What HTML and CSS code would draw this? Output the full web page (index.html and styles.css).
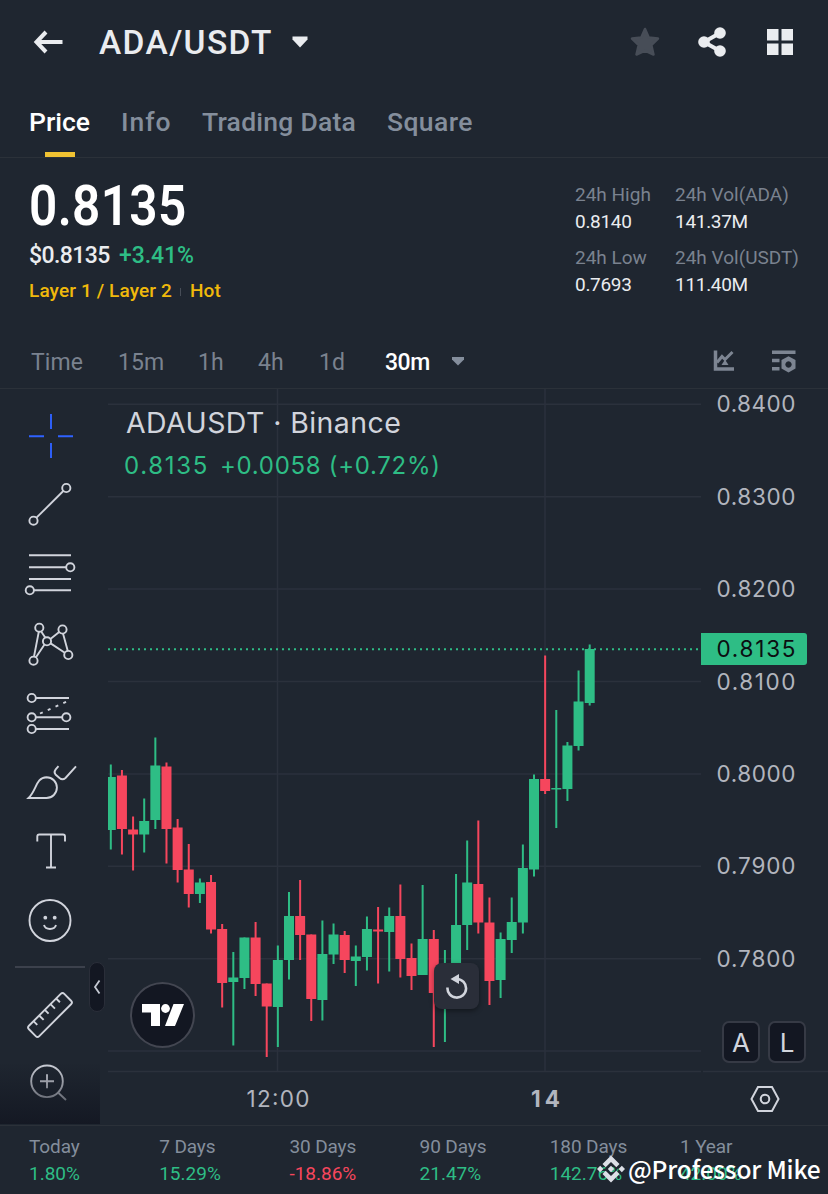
FILE: index.html
```
<!DOCTYPE html>
<html lang="en">
<head>
    <meta charset="UTF-8">
    <meta name="viewport" content="width=device-width, initial-scale=1.0">
    <title>ADA/USDT</title>
    <link rel="stylesheet" href="styles.css">
</head>
<body>

    <header class="top-bar">
        <svg class="back-icon" width="30" height="24" viewBox="0 0 30 24">
            <path d="M13 2 L3.500 12 L13 22 M3 12 H29.500" fill="none" stroke="#eaecef" stroke-width="4"/>
        </svg>
        <h1 class="pair">ADA/USDT</h1>
        <svg class="pair-arrow" width="16" height="12" viewBox="0 0 16 12">
            <path d="M0.5 0.5 H15.5 V3.5 L8 11.5 L0.5 3.5 Z" fill="#eaecef"/>
        </svg>
        <div class="top-actions">
            <svg width="30" height="30" viewBox="0 0 30 30">
                <path d="M15 2 L18.7 10.6 L28 11.5 L21.3 18 L23.5 27.5 L15 23.5 L6.500 27.500 L8.700 18 L2 11.500 L11.300 10.600 Z" fill="#474d57" stroke="#474d57" stroke-width="2.500" stroke-linejoin="round"/>
            </svg>
            <svg width="30" height="30" viewBox="0 0 30 30">
                <path d="M22 6 L6 15 L22 24" fill="none" stroke="#eaecef" stroke-width="4"/>
                <circle cx="22" cy="6" r="5.800" fill="#eaecef"/>
                <circle cx="6" cy="15" r="5.800" fill="#eaecef"/>
                <circle cx="22" cy="24" r="5.800" fill="#eaecef"/>
            </svg>
            <svg width="30" height="30" viewBox="0 0 30 30">
                <path d="M2 2 H13.500 V13.500 H2 Z M16.500 2 H28 V13.500 H16.500 Z M2 16.500 H13.500 V28 H2 Z M16.500 16.500 H28 V28 H16.500 Z" fill="#eaecef"/>
            </svg>
        </div>
    </header>

    <nav class="tabs">
        <a class="tab tab-active">Price</a>
        <a class="tab tab-info">Info</a>
        <a class="tab tab-data">Trading Data</a>
        <a class="tab tab-square">Square</a>
    </nav>

    <section class="summary">
        <div class="summary-left">
            <div class="last-price">0.8135</div>
            <div class="fiat"><span class="fiat-price">$0.8135</span><span class="fiat-change">+3.41%</span></div>
            <div class="tags"><span>Layer 1 / Layer 2</span><i class="tag-sep"></i><span>Hot</span></div>
        </div>
        <div class="stats">
            <div class="stat">
                <div class="stat-label">24h High</div>
                <div class="stat-value">0.8140</div>
            </div>
            <div class="stat">
                <div class="stat-label">24h Vol(ADA)</div>
                <div class="stat-value">141.37M</div>
            </div>
            <div class="stat">
                <div class="stat-label">24h Low</div>
                <div class="stat-value">0.7693</div>
            </div>
            <div class="stat">
                <div class="stat-label">24h Vol(USDT)</div>
                <div class="stat-value">111.40M</div>
            </div>
        </div>
    </section>

    <nav class="intervals">
        <span class="int-time">Time</span>
        <span class="int-15m">15m</span>
        <span class="int-1h">1h</span>
        <span class="int-4h">4h</span>
        <span class="int-1d">1d</span>
        <span class="int-active">30m</span>
        <svg class="int-arrow" width="12" height="10" viewBox="0 0 12 10">
            <path d="M0 0 H12 V2.500 L6 8.500 L0 2.500 Z" fill="#848e9c"/>
        </svg>
        <div class="int-actions">
            <svg width="24" height="24" viewBox="0 0 24 24">
                <path d="M3.500 0.500 V19 H22" fill="none" stroke="#7d8592" stroke-width="3.500"/>
                <path d="M5 12.500 L10 6.500 L13 9.500 L20.500 2" fill="none" stroke="#7d8592" stroke-width="3"/>
                <path d="M13 9.500 L16.500 15 H9.500 Z" fill="#7d8592"/>
            </svg>
            <svg width="26" height="24" viewBox="0 0 26 24">
                <path d="M1 2.300 H24.500 M1 10.500 H8.500 M1 18.800 H8.500" fill="none" stroke="#7d8592" stroke-width="3.400"/>
                <path d="M17.500 6.300 L24.500 10 V18.500 L17.500 22.500 L10.500 18.500 V10 Z M17.500 11.300 a3.200 3.200 0 1 0 0.010 0 Z" fill="#7d8592" fill-rule="evenodd"/>
            </svg>
        </div>
    </nav>

    <main class="chart-area">
        <aside class="tools">
            <div class="tool">
                <svg class="tool-on" viewBox="0 0 52 52"><path d="M5 26.300 H20 M34 26.300 H49 M27 4 V19 M27 33 V48"/></svg>
            </div>
            <div class="tool">
                <svg viewBox="0 0 52 52"><path d="M12.500 38.700 L39.300 12"/><circle cx="9.500" cy="41.700" r="4.100"/><circle cx="42.300" cy="9" r="4.100"/></svg>
            </div>
            <div class="tool">
                <svg viewBox="0 0 52 52"><path d="M5 7.300 H47 M5 19.300 H42 M5 31 H47 M10 42.300 H47"/><circle cx="46.300" cy="19.300" r="4.100"/><circle cx="5.800" cy="42.300" r="4.100"/></svg>
            </div>
            <div class="tool">
                <svg viewBox="0 0 52 52"><path d="M14.800 13.800 L10 38.600 M12 39.300 L20.500 26.500 M17.200 13.400 L21.200 19.600 M26.400 20.900 L35.200 14 M39 15.600 L43.800 32.900 M26.600 25.400 L40.800 34.800"/><circle cx="15.300" cy="9.700" r="4.100"/><circle cx="38.500" cy="11.500" r="4.100"/><circle cx="23" cy="23.300" r="4.100"/><circle cx="9.500" cy="42.700" r="4.100"/><circle cx="44.300" cy="37" r="4.100"/></svg>
            </div>
            <div class="tool">
                <svg viewBox="0 0 52 52"><path d="M12 11 H45 M12 30.300 H38 M12 42 H45"/><path d="M16 26.500 L43 14.500" stroke-dasharray="3 5.500"/><circle cx="7.700" cy="11" r="4.100"/><circle cx="7.700" cy="30.300" r="4.100"/><circle cx="42.300" cy="30.300" r="4.100"/><circle cx="7.700" cy="42" r="4.100"/></svg>
            </div>
            <div class="tool">
                <svg viewBox="0 0 52 52"><path d="M4.500 42 C13 34 11.500 21.500 22.500 21.200 A10.400 10.400 0 0 1 22.500 42 Z"/><path d="M34.500 10.200 L31.700 13.300 Q29.500 16 31.500 18.500 L35.500 22 Q38.500 24.500 41.500 22 L52 10.300"/></svg>
            </div>
            <div class="tool">
                <svg viewBox="0 0 52 52"><path d="M13.300 16.500 V11.500 Q13.300 9.500 15.300 9.500 H39 Q41 9.500 41 11.500 V16.500 M27 9.500 V42.500 M22 42.500 H32"/></svg>
            </div>
            <div class="tool">
                <svg viewBox="0 0 52 52"><circle cx="26" cy="26.500" r="20.500"/><circle class="eye" cx="21.300" cy="23.700" r="1.900"/><circle class="eye" cx="30.700" cy="23.700" r="1.900"/><path d="M20 31 C21.500 36.300 30.500 36.300 32 31"/></svg>
            </div>
            <div class="tool-sep"></div>
            <div class="tool">
                <svg viewBox="0 0 52 52"><g transform="translate(26 27) rotate(-45)"><rect x="-25" y="-7.300" width="50" height="14.600" rx="2.500"/><path d="M-16 -7 V-2 M-8 -7 V-1 M0 -7 V-2 M8 -7 V-1 M16 -7 V-2"/></g></svg>
            </div>
            <div class="tool">
                <svg viewBox="0 0 52 52"><circle cx="23" cy="24.300" r="15.800"/><path d="M16 24.300 H30 M23 17.300 V31.300 M34.500 36 L42 43"/></svg>
            </div>
            <div class="tools-fade"></div>
            <div class="tools-toggle">
                <svg width="8" height="16" viewBox="0 0 8 16"><path d="M6.500 1.500 L2 8 L6.500 14.500" fill="none" stroke="#c5c9d3" stroke-width="1.800"/></svg>
            </div>
        </aside>

        <div class="plot">
            <svg id="chart" width="728" height="736" viewBox="100 389 728 736"></svg>

            <div class="legend">
                <div class="legend-title">ADAUSDT · Binance</div>
                <div class="legend-values"><span class="legend-price">0.8135</span><span>+0.0058 (+0.72%)</span></div>
            </div>

            <div class="tv-logo">
                <svg width="42" height="22" viewBox="0 0 42 22">
                    <path d="M0 0 H18 V22 H9 V8.500 H0 Z M31.500 0 H42 L33 22 H23 Z" fill="#fff"/>
                    <circle cx="23.500" cy="4.500" r="4.400" fill="#fff"/>
                </svg>
            </div>

            <div class="reset-btn">
                <svg width="24" height="26" viewBox="0 0 24 26">
                    <path d="M2.500 14.500 A9.300 9.300 0 1 0 12 6" fill="none" stroke="#d1d4dc" stroke-width="2.600"/>
                    <path d="M5.500 6 L14 1 V11 Z" fill="#d1d4dc"/>
                </svg>
            </div>

            <div class="scale-btns">
                <span class="scale-btn">A</span>
                <span class="scale-btn">L</span>
            </div>

            <svg class="axis-gear" width="30" height="28" viewBox="0 0 30 28">
                <path d="M8 2 H22 L28.500 14 L22 26 H8 L1.500 14 Z" fill="none" stroke="#d1d4dc" stroke-width="2"/>
                <circle cx="15" cy="14" r="4.300" fill="none" stroke="#d1d4dc" stroke-width="2"/>
            </svg>
        </div>
    </main>

    <footer class="returns">
        <div class="return"><span class="return-label">Today</span><span class="up">1.80%</span></div>
        <div class="return"><span class="return-label">7 Days</span><span class="up">15.29%</span></div>
        <div class="return"><span class="return-label">30 Days</span><span class="down">-18.86%</span></div>
        <div class="return"><span class="return-label">90 Days</span><span class="up">21.47%</span></div>
        <div class="return"><span class="return-label">180 Days</span><span class="up">142.76%</span></div>
        <div class="return"><span class="return-label">1 Year</span><span class="up">42.00%</span></div>
    </footer>

    <div class="author">
        <svg width="28" height="28" viewBox="0 0 28 28">
            <path d="M14 0.500 L22.500 9 L19.300 12.200 L14 6.900 L8.700 12.200 L5.500 9 Z M14 27.500 L22.500 19 L19.300 15.800 L14 21.100 L8.700 15.800 L5.500 19 Z M14 10.800 L17.200 14 L14 17.200 L10.800 14 Z M3.200 10.800 L6.400 14 L3.200 17.200 L0 14 Z M24.800 10.800 L28 14 L24.800 17.200 L21.600 14 Z" fill="#dcdfe6"/>
        </svg>
        <span>@Professor Mike</span>
    </div>

    <script src="script.js"></script>
</body>
</html>
```
FILE: styles.css
```
* {
    box-sizing: border-box;
    margin: 0;
    padding: 0;
}

body {
    position: relative;
    width: 828px;
    height: 1194px;
    overflow: hidden;
    background: #1f2630;
    color: #eaecef;
    font-family: Roboto, "Liberation Sans", sans-serif;
}

svg {
    display: block;
    flex: none;
}

span, a, .stat-label, .stat-value {
    white-space: nowrap;
}

/* header */
.top-bar {
    display: flex;
    align-items: center;
    height: 84px;
    padding: 0 33px;
}

.pair {
    width: 172px;
    margin-left: 36px;
    padding-top: 2px;
    font-size: 33.5px;
    font-weight: 500;
    line-height: 40px;
    letter-spacing: 1.4px;
    white-space: nowrap;
}

.pair-arrow {
    margin-left: 21px;
}

.top-actions {
    display: flex;
    gap: 37.5px;
    margin-left: auto;
}

.tabs {
    display: flex;
    height: 74px;
    padding: 21px 30px 0;
    gap: 30px;
    border-bottom: 1px solid #2b3139;
    color: #848e9c;
    font-size: 26.5px;
    font-weight: 500;
    line-height: 34px;
}

.tab {
    position: relative;
    letter-spacing: 0.25px;
}

.tab-active {
    left: -1px;
    width: 61px;
    color: #fff;
    letter-spacing: 0;
}

.tab-active::after {
    content: "";
    position: absolute;
    left: 16px;
    bottom: 0;
    width: 30px;
    height: 5px;
    background: #f0c232;
}

.tab-info {
    width: 51px;
    letter-spacing: 1px;
}

.tab-data {
    width: 155px;
}

.tab-square {
    letter-spacing: 0.4px;
}

/* price summary */
.summary {
    display: flex;
    justify-content: space-between;
    height: 178px;
    padding: 17px 0 0 29px;
}

/* narrow digits */
.last-price {
    width: 170px;
    height: 62px;
    color: #fff;
    font-size: 55px;
    font-weight: 600;
    line-height: 62px;
    letter-spacing: 0.4px;
    transform: scaleX(0.9);
    transform-origin: left;
}

.fiat {
    display: flex;
    height: 36px;
    font-size: 23px;
    font-weight: 500;
    line-height: 37px;
}

.fiat-price {
    width: 90px;
    letter-spacing: -0.6px;
}

.fiat-change {
    color: #2ebd85;
    letter-spacing: -0.1px;
}

.tags {
    display: flex;
    align-items: center;
    height: 35px;
    color: #f0b90b;
    font-size: 19px;
    font-weight: 500;
    letter-spacing: 0.13px;
}

.tag-sep {
    width: 1px;
    height: 8px;
    margin: 3px 9px 0 8px;
    background: #474d57;
}

.stats {
    display: grid;
    grid-template-columns: 100px 153px;
    grid-template-rows: 63.5px 63.5px;
    padding-top: 5.5px;
    line-height: 27px;
    font-size: 19px;
}

.stat-label {
    color: #7a828f;
    letter-spacing: 0;
}

.stat-value {
    letter-spacing: -0.3px;
}

/* intervals */
.intervals {
    display: flex;
    align-items: center;
    height: 53px;
    padding: 0 31px;
    border-bottom: 1px solid #2b3139;
    color: #7a828f;
    font-size: 23px;
    letter-spacing: 0.1px;
}

.int-time {
    width: 87px;
}

.int-15m {
    width: 80px;
}

.int-1h {
    width: 60px;
}

.int-4h {
    width: 61px;
}

.int-1d {
    width: 66px;
}

.int-active {
    width: 67px;
    color: #fff;
    font-weight: 500;
    letter-spacing: -0.5px;
}

.int-actions {
    display: flex;
    gap: 35px;
    margin-left: auto;
}

/* chart */
.chart-area {
    display: flex;
    height: 736px;
}

.tools {
    position: relative;
    width: 100px;
    padding-top: 12.5px;
}

.tool {
    display: flex;
    align-items: center;
    height: 69.2px;
    padding-left: 24px;
}

.tool svg {
    width: 52px;
    height: 52px;
    overflow: visible;
    fill: none;
    stroke: #d1d4dc;
    stroke-width: 1.9;
}

.tool .tool-on {
    stroke: #2f62ff;
}

.tool .eye {
    fill: #d1d4dc;
    stroke: none;
}

.tool-sep {
    height: 2px;
    margin: 11.200px 15px;
    background: #3c414c;
}

.tools-fade {
    position: absolute;
    left: 0;
    bottom: 1px;
    width: 100px;
    height: 62px;
    background: linear-gradient(rgba(19, 23, 34, 0), rgba(19, 23, 34, 0.9));
}

.tools-toggle {
    position: absolute;
    left: 89px;
    top: 573px;
    z-index: 1;
    display: flex;
    align-items: center;
    justify-content: center;
    width: 16px;
    height: 50px;
    border: 1px solid #2a2e39;
    border-radius: 8px;
    background: #131722;
}

.plot {
    position: relative;
    width: 728px;
}

.grid-line {
    stroke: #2b313c;
    stroke-width: 1.5;
}

.candle-up {
    fill: #2ebd85;
}

.candle-down {
    fill: #f6465d;
}

.axis-label {
    fill: #b2b5be;
    font-family: Inter, sans-serif;
    font-size: 22.5px;
}

.axis-day {
    font-weight: 700;
}

.price-tag-text {
    fill: #0b0e11;
}

.last-line {
    stroke: #2ebd85;
    stroke-width: 2;
    stroke-dasharray: 2 4;
}

.legend {
    position: absolute;
    left: 24px;
    top: 14px;
    font-family: Inter, sans-serif;
}

.legend-title {
    padding-left: 2px;
    color: #d1d4dc;
    font-size: 28.5px;
    line-height: 40px;
    letter-spacing: 0.4px;
    white-space: nowrap;
}

.legend-values {
    display: flex;
    margin-top: 3px;
    color: #2ebd85;
    font-size: 24px;
    line-height: 40px;
    letter-spacing: 0.7px;
}

.legend-price {
    width: 96px;
    letter-spacing: 1.7px;
}

.tv-logo {
    position: absolute;
    left: 30px;
    top: 593px;
    display: flex;
    align-items: center;
    justify-content: center;
    width: 65px;
    height: 66px;
    border: 2px solid #434651;
    border-radius: 50%;
    background: #131722;
}

.reset-btn {
    position: absolute;
    left: 334px;
    top: 574px;
    display: flex;
    align-items: center;
    justify-content: center;
    width: 45px;
    height: 46px;
    border-radius: 8px;
    background: #2a2e39;
    box-shadow: 0 2px 5px rgba(0, 0, 0, 0.4);
}

.scale-btns {
    position: absolute;
    left: 622px;
    top: 632px;
    display: flex;
    gap: 8px;
}

.scale-btn {
    width: 38px;
    height: 42px;
    border: 2px solid #363a45;
    border-radius: 7px;
    background: #131722;
    color: #d1d4dc;
    font-family: Inter, sans-serif;
    font-size: 26px;
    line-height: 39px;
    text-align: center;
}

.axis-gear {
    position: absolute;
    left: 650px;
    top: 696px;
}

/* returns */
.returns {
    display: grid;
    grid-template-columns: repeat(6, 130.2px);
    height: 69px;
    padding: 7px 0 0 29px;
    border-top: 1.5px solid #2b3139;
    font-size: 19px;
    line-height: 27px;
}

.return {
    display: flex;
    flex-direction: column;
}

.return-label {
    color: #848e9c;
    letter-spacing: -0.1px;
}

.up {
    color: #2ebd85;
}

.down {
    color: #f6465d;
}

.author {
    position: absolute;
    left: 597px;
    top: 1151px;
    display: flex;
    align-items: center;
    gap: 3px;
    color: #fff;
    font-family: "Noto Sans CJK SC", sans-serif;
    font-size: 24.5px;
    font-weight: 500;
    line-height: 36px;
    letter-spacing: -0.2px;
}
```
FILE: script.js
```
// direction, high, body top, body bottom, low
const candles = [
    ["up", 764.5, 777, 830, 849.5],
    ["down", 770, 775.5, 829, 854.5],
    ["down", 816.5, 829.5, 834.5, 870.5],
    ["up", 798.5, 821, 834.5, 852.5],
    ["up", 737.5, 765.5, 820, 829],
    ["down", 762.5, 766.5, 829, 863.5],
    ["down", 819, 827.5, 870, 882.5],
    ["down", 844, 869.5, 894, 907.5],
    ["up", 878.5, 882.5, 894, 903],
    ["down", 875, 882, 929.5, 933.5],
    ["down", 924, 929, 983, 1007.5],
    ["up", 952, 977.5, 982, 1045.5],
    ["up", 937.5, 937.5, 978, 989],
    ["down", 922, 937.5, 984, 996],
    ["down", 983.5, 983.5, 1006.5, 1057],
    ["up", 945.5, 960, 1007, 1047],
    ["up", 892, 916, 960, 979.5],
    ["down", 880, 916, 935, 960],
    ["down", 934.5, 934.5, 999, 1021],
    ["up", 920.5, 954, 1000, 1020.5],
    ["up", 923.5, 934.5, 954.5, 964],
    ["down", 931, 935, 960, 973],
    ["up", 945.5, 956.5, 961, 986],
    ["up", 916.5, 929, 957, 970.5],
    ["down", 907, 929.5, 931.5, 983.5],
    ["up", 907.5, 916, 932, 971.5],
    ["down", 884.5, 916, 959, 977.5],
    ["down", 943.5, 958, 976, 990],
    ["up", 885, 939, 975, 975],
    ["down", 930, 939, 993, 1047],
    ["up", 950, 968, 993, 1042],
    ["up", 874, 925, 975, 990],
    ["up", 840.5, 882.5, 925, 950],
    ["down", 820.5, 884, 922.5, 933.5],
    ["down", 897.5, 922.5, 981, 1005],
    ["up", 932.5, 939, 980, 998],
    ["up", 897.5, 922, 940, 953],
    ["up", 844.5, 868, 922.5, 933.5],
    ["up", 774.5, 779, 869.5, 876.5],
    ["down", 655.5, 779, 791, 794],
    ["up", 710, 788, 789.5, 828],
    ["up", 742, 745.5, 789, 801],
    ["up", 670.5, 701.5, 746, 750.5],
    ["up", 644.5, 649, 703, 705.5]
];

const left = 108;
const right = 701;
let out = "";

function line(x1, y1, x2, y2, cls) {
    out += `<line x1="${x1}" y1="${y1}" x2="${x2}" y2="${y2}" class="${cls}"/>`;
}

function label(x, y, text, length, cls) {
    out += `<text x="${x}" y="${y}" textLength="${length}" class="axis-label ${cls || ""}">${text}</text>`;
}

// grid and price scale
for (let i = 0; i < 8; i++) {
    const y = 404.3 + i * 92.4;
    line(left, y, right, y, "grid-line");
    if (i < 7) {
        label(716.5, y + 8, (0.84 - i * 0.01).toFixed(4), 79);
    }
}
line(277.5, 389, 277.5, 1071, "grid-line");
line(545, 389, 545, 1071, "grid-line");
line(left, 1071.5, right, 1071.5, "grid-line");
line(703, 1071.5, 828, 1071.5, "grid-line");

// candles
candles.forEach(function (c, i) {
    const x = 110.8 + i * 11.137;
    const bodyLeft = Math.max(left, x - 5);
    out += `<g class="candle-${c[0]}">
        <rect x="${x - 1}" y="${c[1]}" width="2" height="${c[4] - c[1]}"/>
        <rect x="${bodyLeft}" y="${c[2]}" width="${x + 5 - bodyLeft}" height="${c[3] - c[2]}"/>
    </g>`;
});

// last price
line(left, 649.3, right, 649.3, "last-line");
out += `<path d="M701 633 H804 Q807 633 807 636 V662 Q807 665 804 665 H701 Z" fill="#2ebd85"/>`;
label(716.5, 657, "0.8135", 79, "price-tag-text");

// time scale
label(246.5, 1107, "12:00", 63);
label(531, 1107, "14", 29, "axis-day");

document.getElementById("chart").innerHTML = out;
```
